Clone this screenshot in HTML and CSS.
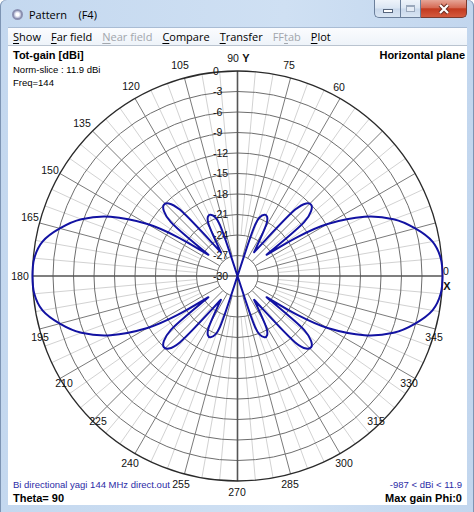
FILE: index.html
```html
<!DOCTYPE html>
<html lang="en">

<head>
    <meta charset="UTF-8">
    <meta name="viewport" content="width=device-width, initial-scale=1.0">
    <title>Pattern (F4)</title>
    <link rel="stylesheet" href="styles.css">
</head>

<body>
    <div class="window">
        <div class="titlebar">
            <span class="app-icon"></span>
            <span class="title">Pattern    (F4)</span>
            <div class="caption-btns">
                <span class="cbtn min"><i></i></span>
                <span class="cbtn max"><i></i></span>
                <span class="cbtn close">
                    <svg width="14" height="12" viewBox="0 0 14 12">
                        <path d="M3 2 L11 10 M11 2 L3 10" stroke="#6b2a20" stroke-width="4" />
                        <path d="M3 2 L11 10 M11 2 L3 10" stroke="#fff" stroke-width="2.2" />
                    </svg>
                </span>
            </div>
        </div>
        <ul class="menubar">
            <li><u>S</u>how</li>
            <li><u>F</u>ar field</li>
            <li class="off"><u>N</u>ear field</li>
            <li><u>C</u>ompare</li>
            <li><u>T</u>ransfer</li>
            <li class="off">FF<u>t</u>ab</li>
            <li><u>P</u>lot</li>
        </ul>
        <div class="client">
            <svg class="plot" width="459" height="459" viewBox="8 46 459 459"></svg>
            <div class="captions">
                <div class="cap-row top">
                    <div class="info">
                        <b>Tot-gain [dBi]</b>
                        <span>Norm-slice : 11.9 dBi</span>
                        <span>Freq=144</span>
                    </div>
                    <b class="plane">Horizontal plane</b>
                </div>
                <div class="cap-row bottom">
                    <div class="info">
                        <span class="blue">Bi directional yagi 144 MHz direct.out</span>
                        <b>Theta= 90</b>
                    </div>
                    <div class="info right">
                        <span class="blue">-987 &lt; dBi &lt; 11.9</span>
                        <b>Max gain Phi:0</b>
                    </div>
                </div>
            </div>
        </div>
    </div>

    <script src="script.js"></script>
</body>

</html>
```

FILE: styles.css
```css
* {
    margin: 0;
    padding: 0;
    box-sizing: border-box;
}
ul {
    list-style: none;
}

body {
    width: 474px;
    height: 512px;
    overflow: hidden;
    background: #fff;
    font-family: "Liberation Sans", Arial, sans-serif;
}

.window {
    width: 474px;
    height: 512px;
    padding: 0 7px 7px 8px;
    display: flex;
    flex-direction: column;
    background: linear-gradient(90deg, #c4d8ef, #cfe0f3 60%, #c2d6ee);
    border-radius: 6px 6px 0 0;
    box-shadow: inset 1px 0 0 #7d94b3, inset -1px 0 0 #7d94b3;
}

/* title bar */
.titlebar {
    height: 27px;
    display: flex;
    align-items: center;
    font-family: "Open Sans", "Noto Sans", sans-serif;
    font-size: 11px;
    color: #000;
}

.app-icon {
    width: 11px;
    height: 11px;
    margin: 2px 0 0 4px;
    border-radius: 50%;
    border: 2px solid #8a8fb0;
    background: radial-gradient(circle, #fff 30%, #c9cbe0 60%);
}

.title {
    margin: 2px 0 0 6px;
    white-space: pre;
}

.caption-btns {
    margin-left: auto;
    align-self: flex-start;
    display: flex;
}

.cbtn {
    height: 18px;
    display: flex;
    align-items: center;
    justify-content: center;
    border: 1px solid #6b7f9b;
    border-top: none;
    background: linear-gradient(#eef3fa, #dbe6f3 48%, #c9d8eb 52%, #d9e5f3);
}

.cbtn.min {
    width: 26px;
    border-right: none;
    border-radius: 0 0 0 5px;
}

.cbtn.min i {
    width: 10px;
    height: 4px;
    margin-top: 5px;
    background: #fff;
    border: 1px solid #56657c;
}

.cbtn.max {
    width: 21px;
}

.cbtn.max i {
    width: 9px;
    height: 7px;
    border: 1px solid #9aa8bc;
    border-top-width: 2px;
    background: #e4ebf5;
}

.cbtn.close {
    width: 46px;
    border-left: none;
    border-color: #7a3a2e;
    border-radius: 0 0 5px 0;
    background: linear-gradient(#e6a597, #d66b55 45%, #c23a1f 52%, #d45a3e);
}

/* menu */
.menubar {
    height: 19px;
    display: flex;
    align-items: center;
    gap: 10px;
    padding: 0 0 1px 5px;
    background: linear-gradient(#fbfcfe, #eef3f9);
    border-top: 1px solid #a9bcd4;
    border-bottom: 1px solid #b9c3cf;
    font-family: "Open Sans", "Noto Sans", sans-serif;
    font-size: 11px;
    color: #000;
}

.menubar li.off {
    color: #a2a6ac;
}

.menubar u {
    text-decoration-thickness: 1px;
    text-underline-offset: 2px;
}

/* plot area */
.client {
    position: relative;
    height: 459px;
    background: #fff;
}

.plot {
    position: absolute;
    left: 0;
    top: 0;
}

.plot .minor {
    stroke: #d2d2d2;
    stroke-width: 1;
}

.plot .ring {
    stroke: #6e6e6e;
    stroke-width: 1;
    fill: none;
}

.plot .major {
    stroke: #7a7a7a;
    stroke-width: 1;
}

.plot .axis {
    stroke: #555;
    stroke-width: 1.6;
}

.plot .outer {
    stroke: #2a2a2a;
    stroke-width: 1.3;
    fill: none;
}

.plot text {
    font-family: "Liberation Sans", Arial, sans-serif;
    font-size: 10.5px;
    fill: #111;
}

.plot text.axname {
    font-weight: bold;
    font-size: 11px;
}

.plot .gain {
    fill: none;
    stroke: #1212a2;
    stroke-width: 2;
    stroke-linejoin: round;
}

.captions {
    position: relative;
    height: 100%;
    display: flex;
    flex-direction: column;
    justify-content: space-between;
    font-size: 9.5px;
    color: #000;
}

.cap-row {
    display: flex;
    justify-content: space-between;
    align-items: flex-start;
}

.cap-row.top {
    padding: 3px 2px 0 5px;
}

.cap-row.bottom {
    padding: 0 5px 0 5px;
}

.info {
    display: flex;
    flex-direction: column;
    line-height: 13.5px;
}

.info.right {
    align-items: flex-end;
}

.info b,
.plane {
    font-size: 11px;
}

.plane {
    line-height: 13px;
}

.blue {
    color: #2b2ba6;
}
```

FILE: script.js
```js
// polar grid + gain curve
var svg = document.querySelector('.plot');
var NS = 'http://www.w3.org/2000/svg';
var cx = 237.5;
var cy = 276;
var R = 205;       // 0 dB ring
var ring = 20.5;   // 3 dB step

function el(tag, attrs, text) {
    var e = document.createElementNS(NS, tag);
    for (var k in attrs) {
        e.setAttribute(k, attrs[k]);
    }
    if (text) e.textContent = text;
    svg.appendChild(e);
    return e;
}

function pt(deg, r) {
    var a = deg * Math.PI / 180;
    return [cx + r * Math.cos(a), cy - r * Math.sin(a)];
}

function spoke(deg, r0, cls) {
    var p = pt(deg, r0);
    var q = pt(deg, R);
    el('line', { x1: p[0], y1: p[1], x2: q[0], y2: q[1], 'class': cls });
}

// light spokes every 5 degrees
for (var a = 0; a < 360; a += 5) {
    if (a % 15) spoke(a, ring * 2, 'minor');
}
// rings
for (var i = 1; i < 10; i++) {
    el('circle', { cx: cx, cy: cy, r: ring * i, 'class': 'ring' });
}
// spokes every 15 degrees
for (var a = 0; a < 360; a += 15) {
    if (a % 90) spoke(a, ring, 'major');
}
el('line', { x1: cx - R, y1: cy, x2: cx + R, y2: cy, 'class': 'axis' });
el('line', { x1: cx, y1: cy - R, x2: cx, y2: cy + R, 'class': 'axis' });
el('circle', { cx: cx, cy: cy, r: R, 'class': 'outer' });

// dB labels along the vertical axis
for (var i = 0; i <= 10; i++) {
    el('text', { x: 213, y: cy - R + ring * i + 1, 'dominant-baseline': 'middle' }, i ? '-' + i * 3 : '0');
}

// angle labels [text, x, y]
var angles = [
    ['105', 180, 66], ['90', 233, 59], ['75', 289, 66], ['60', 339, 88],
    ['120', 131, 87], ['135', 82, 124], ['150', 50, 171], ['165', 30, 218],
    ['180', 20, 277], ['0', 446, 272], ['195', 40, 338], ['210', 64, 384],
    ['225', 98, 422], ['240', 130, 464], ['255', 181, 485], ['270', 237, 493],
    ['285', 290, 485], ['300', 344, 464], ['315', 376, 422], ['330', 409, 384],
    ['345', 434, 338]
];
for (var i = 0; i < angles.length; i++) {
    el('text', { x: angles[i][1], y: angles[i][2], 'text-anchor': 'middle', 'dominant-baseline': 'middle' }, angles[i][0]);
}
el('text', { x: 246, y: 59, 'text-anchor': 'middle', 'dominant-baseline': 'middle', 'class': 'axname' }, 'Y');
el('text', { x: 447, y: 287, 'text-anchor': 'middle', 'dominant-baseline': 'middle', 'class': 'axname' }, 'X');

// lobes of one quarter: [angle, radius px]
var mainQ = [[0, 205], [5, 204], [10, 198], [15, 184], [20, 166], [25, 140], [30, 104], [33, 72], [36, 36]];
var side1 = [[36, 36], [39, 86], [44, 102.5], [49, 88], [55, 29]];
var side2 = [[55, 29], [61, 60], [66, 67], [71, 54], [78, 0]];

// place a lobe around a base angle; dir -1 mirrors it
function place(list, base, dir) {
    var out = [];
    for (var i = 0; i < list.length; i++) {
        out.push(pt(base + dir * list[i][0], list[i][1]));
    }
    if (dir < 0) out.reverse();
    return out;
}

function mainLobe(base) {
    return place(mainQ, base, -1).concat(place(mainQ, base, 1).slice(1));
}

// catmull-rom through the points, sharp at both ends
function curve(p) {
    var s = '';
    for (var i = 0; i < p.length - 1; i++) {
        var p0 = p[i - 1] || p[i];
        var p1 = p[i];
        var p2 = p[i + 1];
        var p3 = p[i + 2] || p2;
        var c1x = p1[0] + (p2[0] - p0[0]) / 6;
        var c1y = p1[1] + (p2[1] - p0[1]) / 6;
        var c2x = p2[0] - (p3[0] - p1[0]) / 6;
        var c2y = p2[1] - (p3[1] - p1[1]) / 6;
        s += 'C' + c1x.toFixed(1) + ' ' + c1y.toFixed(1) + ' ' + c2x.toFixed(1) + ' ' + c2y.toFixed(1) + ' ' + p2[0].toFixed(1) + ' ' + p2[1].toFixed(1);
    }
    return s;
}

var segs = [
    mainLobe(0), place(side1, 0, 1), place(side2, 0, 1),
    place(side2, 180, -1), place(side1, 180, -1),
    mainLobe(180), place(side1, 180, 1), place(side2, 180, 1),
    place(side2, 360, -1), place(side1, 360, -1)
];

var d = '';
for (var s = 0; s < segs.length; s++) {
    var p = segs[s];
    d += (s ? 'L' : 'M') + p[0][0].toFixed(1) + ' ' + p[0][1].toFixed(1) + curve(p);
}
el('path', { d: d + 'Z', 'class': 'gain' });
```
